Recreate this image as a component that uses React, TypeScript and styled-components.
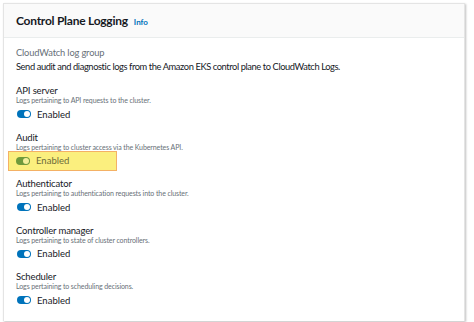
import React from "react";
import styled, { createGlobalStyle } from "styled-components";

const GlobalStyle = createGlobalStyle`
  html, body {
    margin: 0;
    padding: 0;
    background: #ffffff;
    font-family: Lato, "Open Sans", "Liberation Sans", sans-serif;
  }
`;

const Page = styled.div`
  width: 474px;
  height: 322px;
  overflow: hidden;
  padding: 3px 9px 0 3px;
  box-sizing: border-box;
`;

const Card = styled.section`
  border: 1px solid #e4e4e4;
  border-bottom: none;
  box-shadow: 1px 1px 2px rgba(0, 0, 0, 0.25);
  background: #fff;
  height: 318px;
  box-sizing: border-box;
`;

const CardHeader = styled.header`
  display: flex;
  align-items: center;
  gap: 6px;
  height: 33px;
  padding: 0 12px;
  background: #fafafa;
  border-bottom: 1px solid #eaeded;
`;

const Title = styled.h2`
  margin: 0;
  font-size: 12px;
  font-weight: 700;
  color: #16191f;
  letter-spacing: -0.25px;
`;

const InfoLink = styled.span`
  font-size: 8px;
  font-weight: 700;
  color: #0073bb;
  margin-top: 2px;
`;

const CardBody = styled.div`
  padding: 8px 12px 0;
  display: flex;
  flex-direction: column;
`;

const GroupLabel = styled.div`
  font-size: 9.3px;
  color: #687078;
  line-height: 14px;
  letter-spacing: -0.15px;
`;

const Lead = styled.p`
  margin: 0 0 11px;
  font-size: 9.3px;
  color: #16191f;
  line-height: 14px;
  letter-spacing: -0.4px;
`;

const LogType = styled.div`
  display: flex;
  flex-direction: column;
  height: 46.5px;
`;

const LogName = styled.div`
  font-size: 9.5px;
  color: #16191f;
  line-height: 11px;
  letter-spacing: -0.15px;
`;

const LogDesc = styled.div`
  font-size: 7px;
  color: #687078;
  line-height: 8px;
  letter-spacing: -0.1px;
`;

const ToggleRow = styled.div<{ $highlight?: boolean }>`
  display: flex;
  align-items: center;
  gap: 6px;
  width: max-content;
  height: 18px;
  margin: 0 0 0 ${(p) => (p.$highlight ? "-8px" : "0")};
  padding: ${(p) => (p.$highlight ? "0 47px 0 7px" : "0")};
  background: ${(p) => (p.$highlight ? "#fbef7e" : "transparent")};
  border: 1px solid ${(p) => (p.$highlight ? "#f4b165" : "transparent")};
`;

const Track = styled.span<{ $color: string }>`
  position: relative;
  width: 14px;
  height: 8px;
  border-radius: 5px;
  background: ${(p) => p.$color};
`;

const Knob = styled.span<{ $color: string }>`
  position: absolute;
  right: 1px;
  top: 1px;
  width: 6px;
  height: 6px;
  border-radius: 50%;
  background: ${(p) => p.$color};
`;

const ToggleLabel = styled.span<{ $highlight?: boolean }>`
  font-size: 9.5px;
  color: ${(p) => (p.$highlight ? "#6b6b3a" : "#16191f")};
`;

const logTypes = [
  { name: "API server", desc: "Logs pertaining to API requests to the cluster." },
  { name: "Audit", desc: "Logs pertaining to cluster access via the Kubernetes API.", highlight: true },
  { name: "Authenticator", desc: "Logs pertaining to authentication requests into the cluster." },
  { name: "Controller manager", desc: "Logs pertaining to state of cluster controllers." },
  { name: "Scheduler", desc: "Logs pertaining to scheduling decisions." },
];

const App = () => {
  return (
    <Page>
      <GlobalStyle />
      <Card>
        <CardHeader>
          <Title>Control Plane Logging</Title>
          <InfoLink>Info</InfoLink>
        </CardHeader>
        <CardBody>
          <GroupLabel>CloudWatch log group</GroupLabel>
          <Lead>Send audit and diagnostic logs from the Amazon EKS control plane to CloudWatch Logs.</Lead>
          {logTypes.map((t) => (
            <LogType key={t.name}>
              <LogName>{t.name}</LogName>
              <LogDesc>{t.desc}</LogDesc>
              <ToggleRow $highlight={t.highlight}>
                <Track $color={t.highlight ? "#6f9a3c" : "#0073bb"}>
                  <Knob $color={t.highlight ? "#f4ef9a" : "#ffffff"} />
                </Track>
                <ToggleLabel $highlight={t.highlight}>Enabled</ToggleLabel>
              </ToggleRow>
            </LogType>
          ))}
        </CardBody>
      </Card>
    </Page>
  );
};

export default App;
